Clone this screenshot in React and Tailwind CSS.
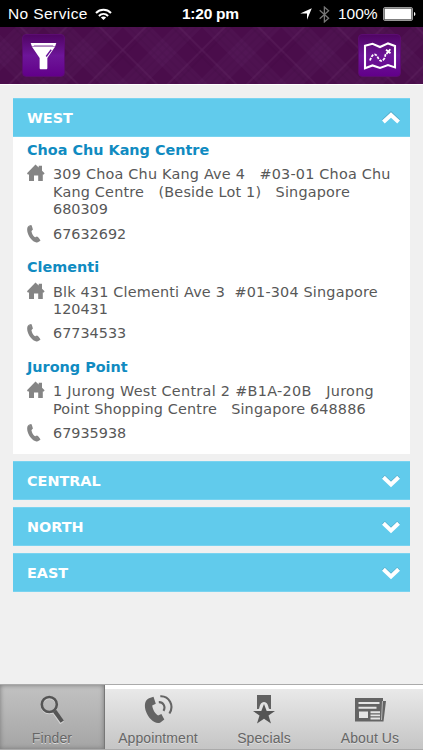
import React from "react";

const centres = [
  {
    name: "Choa Chu Kang Centre",
    address: [
      { text: "309 Choa Chu Kang Ave 4\u00a0\u00a0 #03-01 Choa Chu", spacing: "tracking-[0.21px]" },
      { text: "Kang Centre\u00a0\u00a0 (Beside Lot 1)\u00a0\u00a0 Singapore", spacing: "tracking-[0.2px]" },
      { text: "680309" },
    ],
    phone: "67632692",
  },
  {
    name: "Clementi",
    address: [
      { text: "Blk 431 Clementi Ave 3\u00a0 #01-304 Singapore", spacing: "tracking-[0.18px]" },
      { text: "120431" },
    ],
    phone: "67734533",
  },
  {
    name: "Jurong Point",
    address: [
      { text: "1 Jurong West Central 2 #B1A-20B\u00a0\u00a0 Jurong", spacing: "tracking-[0.3px]" },
      { text: "Point Shopping Centre\u00a0\u00a0 Singapore 648886", spacing: "tracking-[0.16px]" },
    ],
    phone: "67935938",
  },
];

function StatusBar() {
  return (
    <div className="relative flex h-[27px] shrink-0 items-center bg-black pt-px pr-[7px] pl-2 font-['Liberation_Sans',Arial,sans-serif] text-[15.5px] leading-none text-white">
      <span className="w-[81px] whitespace-nowrap tracking-[0.4px]">No Service</span>
      <svg className="ml-[6px]" width="17" height="13" viewBox="0 0 17 13" fill="none" stroke="#fff" strokeWidth="2">
        <path d="M1 5C5.2 .8 11.8 .8 16 5" />
        <path d="M3.9 8C6.6 5.4 10.4 5.4 13.1 8" />
        <path d="M8.5 12L5.9 9.4C7.3 8.1 9.7 8.1 11.1 9.4Z" fill="#fff" stroke="none" />
      </svg>
      <span className="absolute top-[6px] left-[182px] text-[15.5px] font-bold tracking-[-0.25px]">1:20 pm</span>
      <div className="ml-auto flex items-center">
        <svg width="12" height="12" viewBox="0 0 12 12">
          <path d="M11.8.2L7 11.8V5.6L.2 5.4Z" fill="#fff" />
        </svg>
        <svg className="ml-[7px]" width="11" height="17" viewBox="0 0 11 17" fill="none" stroke="#777" strokeWidth="1.3">
          <path d="M.7 4.3L9.6 12.3L5.4 15.9V1.1L9.6 4.7L.7 12.7" />
        </svg>
        <span className="ml-[8px] w-[40px] whitespace-nowrap">100%</span>
        <svg className="ml-[5px]" width="33" height="14" viewBox="0 0 33 14">
          <rect x=".5" y=".5" width="29" height="13" rx="1.5" fill="none" stroke="#999" />
          <rect x="1.5" y="1.5" width="27" height="11" fill="#fff" />
          <path d="M31 5C32.8 5.5 32.8 8.5 31 9Z" fill="#fff" />
        </svg>
      </div>
    </div>
  );
}

function Plaid() {
  return (
    <svg className="absolute inset-0" width="423" height="57">
      <defs>
        <pattern id="plaid" width="56" height="56" patternUnits="userSpaceOnUse" patternTransform="translate(4 6) rotate(45)">
          <rect width="56" height="56" fill="#4a0d4b" />
          <rect x="4" width="20" height="56" fill="#7b3a80" opacity=".1" />
          <rect y="4" width="56" height="20" fill="#7b3a80" opacity=".1" />
          <path d="M8 0V56M14 0V56M20 0V56M0 8H56M0 14H56M0 20H56" stroke="#3e073f" opacity=".3" />
          <path d="M40 0V56M0 40H56" stroke="#8c5490" opacity=".22" />
          <path d="M45 0V56M0 45H56" stroke="#340535" opacity=".25" />
        </pattern>
      </defs>
      <rect width="423" height="57" fill="url(#plaid)" />
    </svg>
  );
}

function HeaderButton({ children }) {
  return (
    <div className="relative flex size-[43px] items-center justify-center rounded-[4px] border border-[#5c0b72] bg-linear-to-b from-[#500564] via-[#6d1599] to-[#62008a]">
      {children}
    </div>
  );
}

function Header() {
  return (
    <header className="relative flex h-[57px] shrink-0 items-start justify-between bg-[#4a0d4b] pt-[7px] pr-[22px] pl-[22px]">
      <Plaid />
      <HeaderButton>
        <svg className="mr-px" width="27" height="28" viewBox="0 0 28 29">
          <path d="M.7 1H27.3L26 4.7H2Z" fill="#fff" />
          <path d="M2.2 5.2H25.8L18 16.5V27C18 28 17.5 28.3 16.7 28.3H11.3C10.5 28.3 10 28 10 27V16.5Z" fill="#fff" />
          <path d="M4 3.6H24" stroke="#a67dbb" strokeWidth=".8" />
          <path d="M22 8L16.8 15" stroke="#68109a" strokeWidth="1.4" />
        </svg>
      </HeaderButton>
      <HeaderButton>
        <svg width="34" height="28" viewBox="0 0 34 28" fill="none" stroke="#fff">
          <path d="M2 3.8L9.5 1.8L17 5L25 1.4L32 4V25.4L25 23L17 26L9.5 23.4L2 26.3Z" strokeWidth="2.1" />
          <path d="M7 18.5C9 12 12 11 14 14C16 18 18 21 21 17C22.7 15 21.5 12 24 11" strokeWidth="1.8" strokeDasharray="2.7 1.2" />
          <path d="M23 7.7L27.5 11.3M27.3 7.3L23.5 12" strokeWidth="1.8" />
        </svg>
      </HeaderButton>
    </header>
  );
}

function Chevron({ up }) {
  return (
    <svg width="18" height="14" viewBox="0 0 18 14" fill="none">
      <path d={up ? "M1.4 10L9 2.8L16.6 10" : "M1.4 2.4L9 9.4L16.6 2.4"} stroke="#4799b5" strokeWidth="4" opacity=".6" />
      <path d={up ? "M1.4 11L9 4L16.6 11" : "M1.4 3.2L9 10.4L16.6 3.2"} stroke="#fff" strokeWidth="4" />
    </svg>
  );
}

function RegionBar({ title, open }) {
  return (
    <div className="flex h-[39px] items-center justify-between border-y border-[#79d3f0] bg-[#61cbec] pt-px pr-[10px] pl-[14px] text-[14.4px] font-bold text-white">
      <span className={open ? "pt-[2px]" : "pt-px"}>{title}</span>
      <Chevron up={open} />
    </div>
  );
}

function Centre({ name, address, phone }) {
  return (
    <section className="mb-[16.2px] whitespace-nowrap text-[14.4px] leading-[17.65px] text-[#585858]">
      <h2 className="mb-[6.4px] pl-px font-bold text-[#108bc1]">{name}</h2>
      <div className="mb-[6.6px] flex">
        <svg className="-mt-[2px] mr-[8px] ml-px shrink-0" width="18" height="18" viewBox="0 0 18 18" fill="#858585">
          <path d="M8.5 .6L11.7 3.6V1.8H15V6.7L17.6 9.3L16.8 10.6H15.8V17H11.2V11.4H7V17H2V10.6H.8L0 9.3Z" />
        </svg>
        <div>
          {address.map(({ text, spacing }) => (
            <p key={text} className={spacing}>
              {text}
            </p>
          ))}
        </div>
      </div>
      <div className="flex">
        <svg className="-mt-px mr-[12px] ml-px shrink-0" width="14" height="18" viewBox="0 0 14 18" fill="#858585">
          <path d="M2.2 .6C0 1.7-.3 4.5 .7 8C2.2 12.7 6 17 9.4 17.4C10.5 17.5 11.2 17.2 11.8 16.8L9 11.9C8.3 12.3 7.8 12.3 7.3 11.8C5.9 10.4 5 8.7 4.5 6.5C4.4 5.8 4.7 5.6 5.2 5.3Z" />
          <path d="M2.2 .5L4.2 .1C4.8 .2 5.9 4.3 5.9 4.7L4.6 5.6ZM8.5 12.1L10 11.4C10.6 11.3 13.5 14.8 13.5 15.4L11.6 16.9Z" />
        </svg>
        <p>{phone}</p>
      </div>
    </section>
  );
}

function Tab({ label, active, children }) {
  return (
    <div
      className={
        active
          ? "flex w-[105px] flex-col items-center border-r border-[#777] bg-linear-to-b from-[#c2c2c2] to-[#a5a5a5] shadow-[inset_0_0_5px_#777]"
          : "flex flex-1 flex-col items-center border-t-4 border-white bg-linear-to-b from-[#e9e9e9] to-[#c5c5c5]"
      }
    >
      <div className={active ? "mt-[8px] h-[36px]" : "mt-[4px] h-[36px]"}>{children}</div>
      <span className="text-[14px] leading-[18px] tracking-[0.1px] whitespace-nowrap text-[#666] [text-shadow:0_1px_0_#ddd]">{label}</span>
    </div>
  );
}

function TabBar() {
  return (
    <nav className="flex h-[66px] shrink-0 border-t border-b border-t-[#aaa] border-b-[#aaa] font-['Liberation_Sans',Arial,sans-serif]">
      <Tab label="Finder" active>
        <svg width="28" height="32" viewBox="0 0 28 32" fill="none">
          <circle cx="11.3" cy="12.5" r="7.5" stroke="#d4d4d4" strokeWidth="2.5" />
          <circle cx="11.3" cy="11.5" r="7.5" stroke="#555" strokeWidth="2.6" />
          <path d="M16.4 19L24 30" stroke="#d4d4d4" strokeWidth="4.5" />
          <path d="M16.6 18L24.2 28.6" stroke="#555" strokeWidth="4" />
        </svg>
      </Tab>
      <Tab label="Appointment">
        <svg width="30" height="32" viewBox="0 0 30 32" fill="none">
          <path d="M6 5.2L10.5 3.8L12.8 10.7L9.2 12.5C9.6 16.7 12.3 20.7 15.1 22.6L18.4 21L21.3 26.5L17.4 29.5C12.5 32 5.5 25.5 3.2 19C1.1 13.2 1.3 7.5 6 5.2Z" fill="#646464" />
          <path d="M15.8 9.1C20 8.9 23.1 13.5 20.5 17.9M17.3 3.3C26.2 2.8 31.5 12.7 26.4 20.5" stroke="#646464" strokeWidth="2.1" />
        </svg>
      </Tab>
      <Tab label="Specials">
        <svg width="24" height="32" viewBox="0 0 24 32">
          <path d="M5 2H19V16H5Z" fill="#616161" />
          <path d="M12 9C8.6 9.2 8.1 12.2 7.1 15.5L4.5 17.5H19.5L16.9 15.5C15.9 12.2 15.4 9.2 12 9Z" fill="#e2e2e2" />
          <path d="M12 11L14.7 18H23L16.5 22.5L19 30.6L12 25.7L5 30.6L7.5 22.5L1 18H9.3Z" fill="#555" />
        </svg>
      </Tab>
      <Tab label="About Us">
        <svg width="34" height="32" viewBox="0 0 34 32">
          <path d="M2 5H30V8H33L30.5 28.5H2Z" fill="#646464" />
          <path d="M5.5 10H26.5M5.5 14.8H23.5M17.5 19.3H27M17.5 22.4H27M17.5 25.5H27" stroke="#e5e5e5" strokeWidth="1.9" />
          <path d="M6 18.5H15V25H6Z" fill="#e5e5e5" />
          <path d="M29.5 8L28.5 27" stroke="#ccc" strokeWidth=".8" />
        </svg>
      </Tab>
    </nav>
  );
}

export default function App() {
  return (
    <div className="flex h-[750px] w-[423px] flex-col overflow-hidden bg-[#f0f0f0] font-['DejaVu_Sans',Verdana,sans-serif]">
      <StatusBar />
      <Header />
      <main className="flex flex-1 flex-col gap-[7px] border-t border-white px-[13px] pt-[13px]">
        <div>
          <RegionBar title="WEST" open />
          <div className="h-[317px] overflow-hidden bg-white pt-[5px] pl-[13px]">
            {centres.map((centre) => (
              <Centre key={centre.name} {...centre} />
            ))}
          </div>
        </div>
        <RegionBar title="CENTRAL" />
        <RegionBar title="NORTH" />
        <RegionBar title="EAST" />
      </main>
      <TabBar />
    </div>
  );
}
